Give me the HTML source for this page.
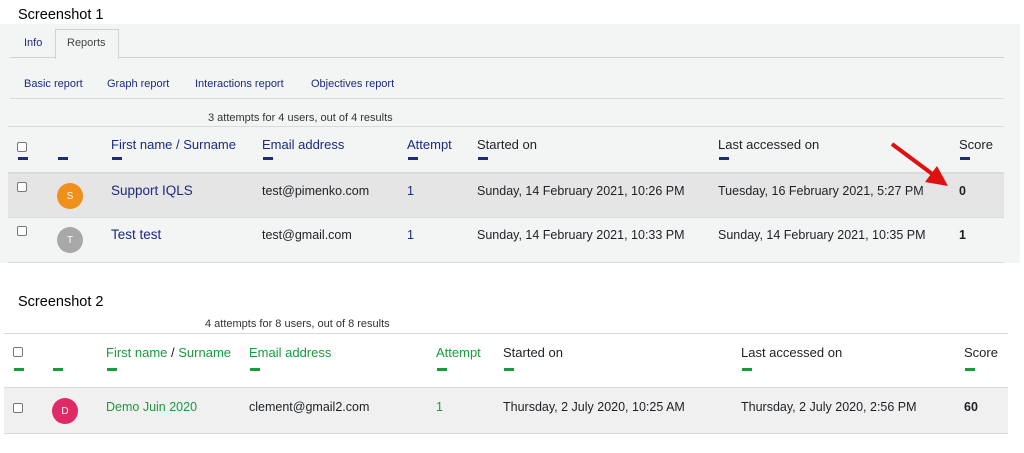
<!DOCTYPE html>
<html><head><meta charset="utf-8"><style>
body{margin:0;width:1024px;height:453px;background:#fff;position:relative;overflow:hidden;font-family:"Liberation Sans","DejaVu Sans",sans-serif;}
.a{position:absolute;white-space:nowrap;}
.t{font-size:12.5px;color:#1d2125;}
.b1{color:#1c2a80;}
.g{color:#1a9a3c;}
.h{font-size:13px;}
.d{position:absolute;height:3px;width:10px;}
.cb{position:absolute;width:8px;height:8px;border:1px solid #777;border-radius:2px;background:#fff;}
.av{position:absolute;border-radius:50%;color:#fff;font-size:10px;display:flex;align-items:center;justify-content:center;}
.ln{position:absolute;height:1px;background:#d8dadd;}
</style></head><body>
<div class="a" style="left:18px;top:7px;font-size:14.5px;color:#000">Screenshot 1</div>
<div style="position:absolute;left:0;top:24px;width:1020px;height:239px;background:#f3f4f4"></div>
<div class="ln" style="left:10px;top:57px;width:994px;background:#d0d3d6"></div>
<div style="position:absolute;left:55px;top:29px;width:62px;height:29px;border:1px solid #d0d3d6;border-bottom:none;background:#f3f4f4"></div>
<div class="a b1" style="left:24px;top:37px;font-size:11px">Info</div>
<div class="a" style="left:67px;top:37px;font-size:11px;color:#444">Reports</div>
<div class="a b1" style="left:24px;top:78px;font-size:11px">Basic report</div>
<div class="a b1" style="left:107px;top:78px;font-size:11px">Graph report</div>
<div class="a b1" style="left:195px;top:78px;font-size:11px">Interactions report</div>
<div class="a b1" style="left:311px;top:78px;font-size:11px">Objectives report</div>
<div class="ln" style="left:10px;top:98px;width:994px"></div>
<div class="a" style="left:208px;top:112px;font-size:11px;color:#333">3 attempts for 4 users, out of 4 results</div>
<div class="ln" style="left:8px;top:126px;width:996px"></div>
<div class="cb" style="left:17px;top:142px"></div>
<div class="a h b1" style="left:111px;top:137px">First name / Surname</div>
<div class="a h b1" style="left:262px;top:137px">Email address</div>
<div class="a h b1" style="left:407px;top:137px">Attempt</div>
<div class="a h" style="left:477px;top:137px;color:#1d2125">Started on</div>
<div class="a h" style="left:718px;top:137px;color:#1d2125">Last accessed on</div>
<div class="a h" style="left:959px;top:137px;color:#1d2125">Score</div>
<div class="d" style="left:18px;top:157px;background:#1c2a80"></div>
<div class="d" style="left:58px;top:157px;background:#1c2a80"></div>
<div class="d" style="left:112px;top:157px;background:#1c2a80"></div>
<div class="d" style="left:263px;top:157px;background:#1c2a80"></div>
<div class="d" style="left:408px;top:157px;background:#1c2a80"></div>
<div class="d" style="left:478px;top:157px;background:#1c2a80"></div>
<div class="d" style="left:719px;top:157px;background:#1c2a80"></div>
<div class="d" style="left:960px;top:157px;background:#1c2a80"></div>
<div class="ln" style="left:8px;top:172px;width:996px;height:2px"></div>
<div style="position:absolute;left:8px;top:174px;width:996px;height:43px;background:#e5e5e5"></div>
<div class="ln" style="left:8px;top:217px;width:996px"></div>
<div class="ln" style="left:8px;top:262px;width:996px"></div>
<div class="cb" style="left:17px;top:182px"></div>
<div class="av" style="left:57px;top:183px;width:26px;height:26px;background:#f0901a">S</div>
<div class="a t b1" style="left:111px;top:183px;font-size:13.5px">Support IQLS</div>
<div class="a t" style="left:262px;top:184px">test@pimenko.com</div>
<div class="a t b1" style="left:407px;top:184px">1</div>
<div class="a t" style="left:477px;top:184px">Sunday, 14 February 2021, 10:26 PM</div>
<div class="a t" style="left:718px;top:184px">Tuesday, 16 February 2021, 5:27 PM</div>
<div class="a t" style="left:959px;top:184px;font-weight:bold">0</div>
<div class="cb" style="left:17px;top:226px"></div>
<div class="av" style="left:57px;top:227px;width:26px;height:26px;background:#a8a8a8">T</div>
<div class="a t b1" style="left:111px;top:227px;font-size:13.5px">Test test</div>
<div class="a t" style="left:262px;top:228px">test@gmail.com</div>
<div class="a t b1" style="left:407px;top:228px">1</div>
<div class="a t" style="left:477px;top:228px">Sunday, 14 February 2021, 10:33 PM</div>
<div class="a t" style="left:718px;top:228px">Sunday, 14 February 2021, 10:35 PM</div>
<div class="a t" style="left:959px;top:228px;font-weight:bold">1</div>
<svg style="position:absolute;left:885px;top:138px" width="70" height="55"><line x1="7" y1="6" x2="50" y2="38" stroke="#e01010" stroke-width="4"/><polygon points="63,48 40,44 52,28" fill="#e01010"/></svg>

<div class="a" style="left:18px;top:294px;font-size:14.5px;color:#000">Screenshot 2</div>
<div class="a" style="left:205px;top:318px;font-size:11px;color:#333">4 attempts for 8 users, out of 8 results</div>
<div class="ln" style="left:4px;top:333px;width:1004px"></div>
<div class="cb" style="left:13px;top:347px"></div>
<div class="a h g" style="left:106px;top:345px">First name <span style="color:#222">/</span> Surname</div>
<div class="a h g" style="left:249px;top:345px">Email address</div>
<div class="a h g" style="left:436px;top:345px">Attempt</div>
<div class="a h" style="left:503px;top:345px;color:#1d2125">Started on</div>
<div class="a h" style="left:741px;top:345px;color:#1d2125">Last accessed on</div>
<div class="a h" style="left:964px;top:345px;color:#1d2125">Score</div>
<div class="d" style="left:14px;top:368px;background:#1a9a3c"></div>
<div class="d" style="left:53px;top:368px;background:#1a9a3c"></div>
<div class="d" style="left:107px;top:368px;background:#1a9a3c"></div>
<div class="d" style="left:250px;top:368px;background:#1a9a3c"></div>
<div class="d" style="left:437px;top:368px;background:#1a9a3c"></div>
<div class="d" style="left:504px;top:368px;background:#1a9a3c"></div>
<div class="d" style="left:742px;top:368px;background:#1a9a3c"></div>
<div class="d" style="left:965px;top:368px;background:#1a9a3c"></div>
<div class="ln" style="left:4px;top:387px;width:1004px"></div>
<div style="position:absolute;left:4px;top:388px;width:1004px;height:45px;background:#f0f0f0"></div>
<div class="ln" style="left:4px;top:433px;width:1004px"></div>
<div class="cb" style="left:13px;top:403px"></div>
<div class="av" style="left:52px;top:398px;width:26px;height:26px;background:#e02a66">D</div>
<div class="a t g" style="left:106px;top:400px">Demo Juin 2020</div>
<div class="a t" style="left:249px;top:400px">clement@gmail2.com</div>
<div class="a t g" style="left:436px;top:400px">1</div>
<div class="a t" style="left:503px;top:400px">Thursday, 2 July 2020, 10:25 AM</div>
<div class="a t" style="left:741px;top:400px">Thursday, 2 July 2020, 2:56 PM</div>
<div class="a t" style="left:964px;top:400px;font-weight:bold">60</div>
</body></html>
